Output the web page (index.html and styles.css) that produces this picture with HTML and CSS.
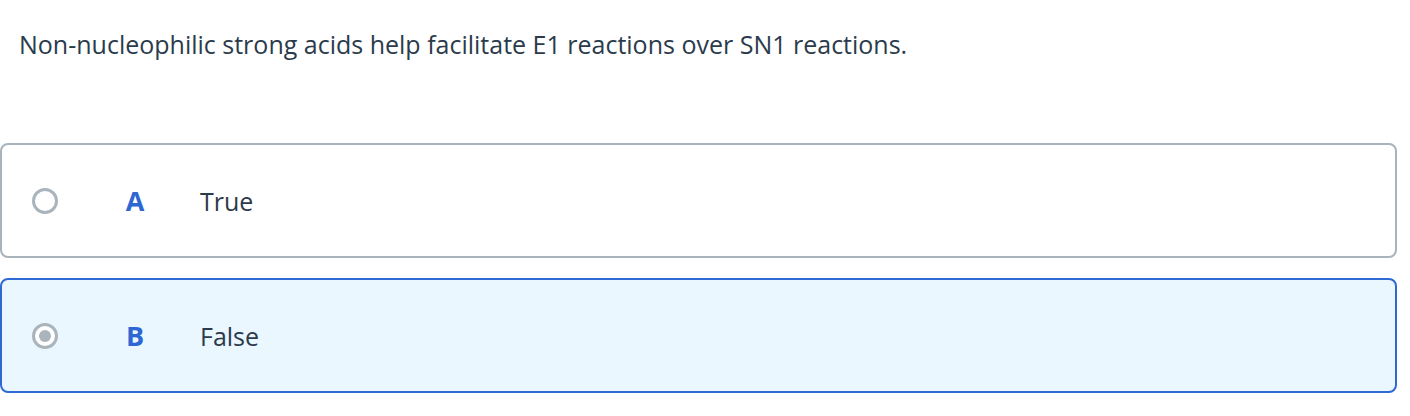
FILE: index.html
```html
<!DOCTYPE html>
<html>
<head>
<meta charset="utf-8">
<link rel="stylesheet" href="styles.css">
</head>
<body>
<div class="question">
  <p class="prompt">Non-nucleophilic strong acids help facilitate E1 reactions over SN1 reactions.</p>
  <div class="choices">
    <div class="choice">
      <span class="radio"></span>
      <span class="letter">A</span>
      <span class="label">True</span>
    </div>
    <div class="choice selected">
      <span class="radio"></span>
      <span class="letter">B</span>
      <span class="label">False</span>
    </div>
  </div>
</div>
</body>
</html>
```

FILE: styles.css
```css
html, body {
  margin: 0;
  padding: 0;
  background: #ffffff;
}
body {
  font-family: "Open Sans", "Noto Sans", sans-serif;
  color: #2b3b4b;
}
.question {
  width: 1397px;
}
.prompt {
  margin: 0;
  padding: 29px 0 0 19px;
  font-size: 25px;
  line-height: 30px;
  height: 143px;
  box-sizing: border-box;
}
.choices {
  display: flex;
  flex-direction: column;
  gap: 20px;
}
.choice {
  box-sizing: border-box;
  height: 115px;
  border: 2px solid #a9b3bc;
  border-radius: 8px;
  display: flex;
  align-items: center;
  padding-left: 30px;
}
.choice.selected {
  border-color: #2f69d4;
  background: #eaf7fe;
}
.radio {
  box-sizing: border-box;
  width: 26px;
  height: 26px;
  border: 3px solid #aab4bd;
  border-radius: 50%;
  background: #fff;
  display: flex;
  align-items: center;
  justify-content: center;
}
.selected .radio::after {
  content: "";
  width: 12px;
  height: 12px;
  border-radius: 50%;
  background: #aab4bd;
}
.letter {
  width: 40px;
  margin-left: 57px;
  margin-right: 45px;
  text-align: center;
  font-size: 27px;
  font-weight: 700;
  color: #2e66d4;
}
.label {
  font-size: 25px;
}
```
